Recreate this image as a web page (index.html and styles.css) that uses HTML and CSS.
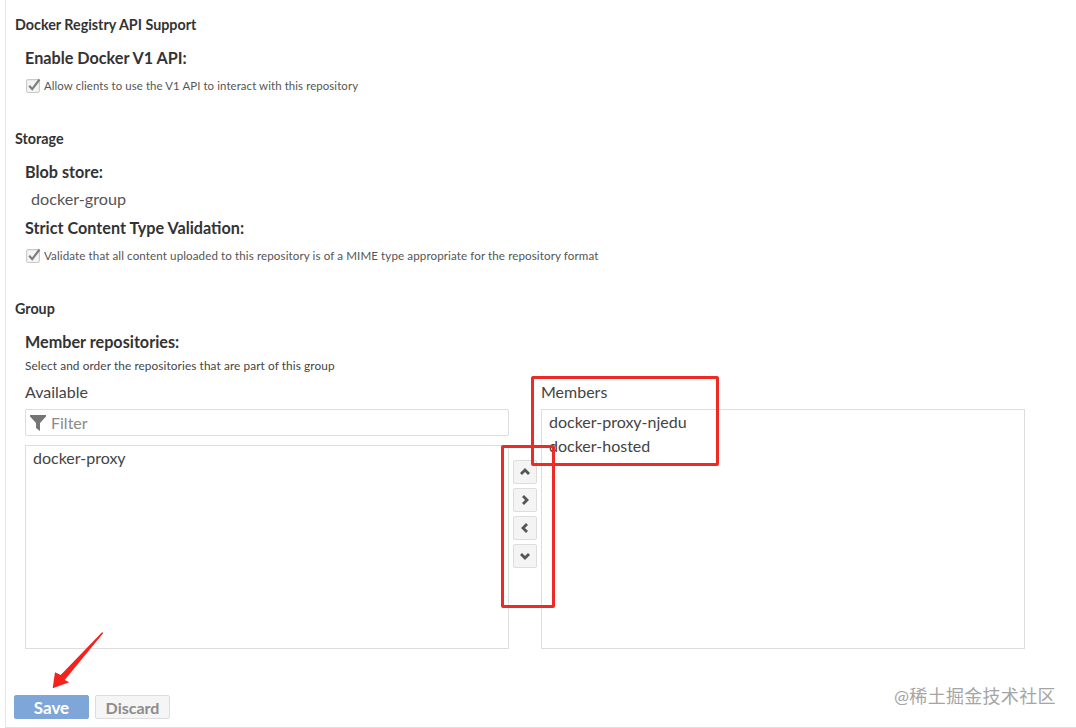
FILE: index.html
```html
<!DOCTYPE html>
<html lang="en">
<head>
<meta charset="utf-8">
<title>Docker group repository</title>
<link rel="stylesheet" href="styles.css">
</head>
<body>
<main class="page">
  <form class="form">
    <section class="section section-api">
      <h2 class="section-title">Docker Registry API Support</h2>
      <div class="field">
        <h3 class="field-label">Enable Docker V1 API:</h3>
        <label class="check-row">
          <svg class="check" viewBox="0 0 14 14" aria-hidden="true"><rect x="0.5" y="1.5" width="12" height="12" rx="1.5" fill="#f4f4f4" stroke="#c9c9c9"/><path d="M3 7.2 5.8 10.4 12.6 1.4" fill="none" stroke="#7d7d7d" stroke-width="2"/></svg>
          <span>Allow clients to use the V1 API to interact with this repository</span>
        </label>
      </div>
    </section>

    <section class="section section-storage">
      <h2 class="section-title">Storage</h2>
      <div class="field">
        <h3 class="field-label">Blob store:</h3>
        <div class="static-value">docker-group</div>
        <h3 class="field-label field-label-strict">Strict Content Type Validation:</h3>
        <label class="check-row">
          <svg class="check" viewBox="0 0 14 14" aria-hidden="true"><rect x="0.5" y="1.5" width="12" height="12" rx="1.5" fill="#f4f4f4" stroke="#c9c9c9"/><path d="M3 7.2 5.8 10.4 12.6 1.4" fill="none" stroke="#7d7d7d" stroke-width="2"/></svg>
          <span class="check-long">Validate that all content uploaded to this repository is of a MIME type appropriate for the repository format</span>
        </label>
      </div>
    </section>

    <section class="section section-group">
      <h2 class="section-title">Group</h2>
      <div class="field">
        <h3 class="field-label">Member repositories:</h3>
        <p class="help">Select and order the repositories that are part of this group</p>
        <div class="picker">
          <div class="picker-col">
            <div class="picker-title">Available</div>
            <div class="filter">
              <svg class="filter-icon" viewBox="0 0 16 16" aria-hidden="true"><path d="M0 0H16V1.6L10 8V16L6 13V8L0 1.6Z" fill="#757575"/></svg>
              <span>Filter</span>
            </div>
            <ul class="list list-available"><li>docker-proxy</li></ul>
          </div>
          <div class="picker-buttons">
            <button type="button" class="move"><svg viewBox="0 0 10 10" aria-hidden="true"><path d="M1 7 5 3 9 7" /></svg></button>
            <button type="button" class="move"><svg viewBox="0 0 10 10" aria-hidden="true"><path d="M3 1 7 5 3 9" /></svg></button>
            <button type="button" class="move"><svg viewBox="0 0 10 10" aria-hidden="true"><path d="M7 1 3 5 7 9" /></svg></button>
            <button type="button" class="move"><svg viewBox="0 0 10 10" aria-hidden="true"><path d="M1 3 5 7 9 3" /></svg></button>
          </div>
          <div class="picker-col">
            <div class="picker-title">Members</div>
            <ul class="list list-members"><li>docker-proxy-njedu</li><li>docker-hosted</li></ul>
          </div>
        </div>
      </div>
    </section>

    <div class="actions">
      <button type="button" class="btn btn-save">Save</button>
      <button type="button" class="btn btn-discard">Discard</button>
    </div>
  </form>

  <div class="mark mark-members"></div>
  <div class="mark mark-buttons"></div>
  <svg class="arrow" viewBox="0 0 56 62" aria-hidden="true"><path d="M52 2.300 53.300 3 14.700 50 19.300 52.300 2.700 58.300 5 42.300 10.700 45Z" fill="#f5211c"/></svg>
  <div class="watermark">@稀土掘金技术社区</div>
</main>
</body>
</html>
```
FILE: styles.css
```css
* { box-sizing: border-box; }
html, body { margin: 0; padding: 0; background: #fff; }
body {
  width: 1076px;
  height: 728px;
  overflow: hidden;
  font-family: Lato, "Noto Sans CJK SC", sans-serif;
  color: #333;
}
.page {
  position: relative;
  height: 728px;
  margin-left: 5px;
  border-left: 1px solid #e6e6e6;
  border-bottom: 1px solid #e0e0e0;
}
.form { padding: 17px 0 0 9px; }
.section-title {
  margin: 0;
  font-size: 14.300px;
  line-height: 16px;
  font-weight: 700;
  color: #333;
}
.field { padding-left: 10px; }
.field-label {
  margin: 0;
  font-size: 16.200px;
  line-height: 20px;
  font-weight: 700;
  color: #333;
}
.section-api .field { padding-top: 15px; }
.section-storage { margin-top: 38px; }
.section-storage .field { padding-top: 15px; }
.section-group { margin-top: 38px; }
.section-group .field { padding-top: 15px; }
.check-row {
  display: flex;
  align-items: center;
  gap: 3px;
  margin-top: 9px;
  height: 16px;
  font-size: 11.400px;
  letter-spacing: 0.1px;
  color: #555;
}
.check-long { font-size: 11.600px; }
.check { width: 15px; height: 15px; flex: none; margin-left: 1px; }
.static-value {
  padding-left: 6px;
  margin-top: 2px;
  font-size: 16.200px;
  line-height: 30px;
  color: #555;
}
.field-label-strict { margin-top: 4px; }
.help {
  margin: 7px 0 0;
  font-size: 11.800px;
  line-height: 14px;
  letter-spacing: 0.1px;
  color: #444;
}
.picker { display: flex; margin-top: 9px; }
.picker-col { width: 484px; flex: none; }
.picker-title {
  font-size: 16px;
  line-height: 20px;
  color: #444;
}
.filter {
  display: flex;
  align-items: center;
  gap: 5px;
  height: 27px;
  margin-top: 7px;
  padding-left: 4px;
  border: 1px solid #ddd;
  border-radius: 2px;
  font-size: 16px;
  color: #8a8a8a;
}
.filter-icon { width: 16px; height: 16px; flex: none; }
.list {
  margin: 0;
  padding: 0 7px;
  list-style: none;
  border: 1px solid #ddd;
  font-size: 16px;
  line-height: 24px;
  color: #444;
}
.list-available { height: 204px; margin-top: 9px; }
.list-members { height: 240px; margin-top: 7px; }
.picker-buttons {
  width: 32px;
  flex: none;
  display: flex;
  flex-direction: column;
  align-items: center;
  gap: 4px;
  padding-top: 78px;
}
.move {
  width: 24px;
  height: 24px;
  padding: 0;
  display: flex;
  align-items: center;
  justify-content: center;
  background: #f4f4f4;
  border: 1px solid #ddd;
  border-radius: 2px;
}
.move svg {
  width: 10px;
  height: 10px;
  fill: none;
  stroke: #555;
  stroke-width: 2.800;
}
.actions {
  display: flex;
  gap: 6px;
  margin-top: 46px;
  margin-left: -1px;
}
.btn {
  width: 75px;
  height: 24px;
  padding: 0;
  border-radius: 2px;
  font-family: inherit;
  font-size: 16px;
  font-weight: 700;
}
.btn-save { background: #7fa6d9; border: 1px solid #7fa6d9; color: #fff; font-size: 17px; }
.btn-discard { background: #f5f5f5; border: 1px solid #ddd; color: #8c8c8c; }
.mark {
  position: absolute;
  border: 3px solid #ee2a24;
  border-radius: 2px;
}
.mark-members { left: 525px; top: 376px; width: 188px; height: 90px; }
.mark-buttons { left: 495px; top: 445px; width: 54px; height: 163px; }
.arrow { position: absolute; left: 44px; top: 630px; width: 56px; height: 62px; }
.watermark {
  position: absolute;
  left: 888px;
  top: 685px;
  font-size: 18px;
  line-height: 22px;
  letter-spacing: 0.3px;
  color: #a5a5a5;
}
```
